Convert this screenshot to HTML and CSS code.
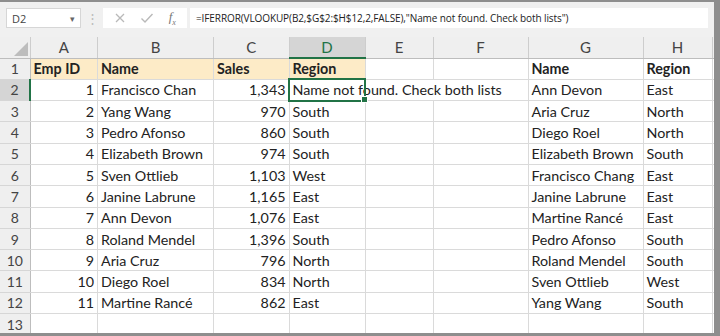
FILE: index.html
```html
<!DOCTYPE html>
<html>
<head>
	<title>Sheet</title>
	<link rel="stylesheet" href="styles.css">
</head>
<body>
	<div class="frame">
		<div class="toolbar">
			<div class="namebox"><span>D2</span><span class="caret">&#9662;</span></div>
			<div class="grip">&#8942;</div>
			<div class="fbtns">
				<svg width="12" height="12" viewBox="0 0 12 12"><path d="M2 2 L10 10 M10 2 L2 10" stroke="#b9b9b9" stroke-width="1.3" fill="none"/></svg>
				<svg width="14" height="12" viewBox="0 0 14 12"><path d="M1.5 6.5 L5 10 L12.5 2" stroke="#b9b9b9" stroke-width="1.4" fill="none"/></svg>
				<span class="fx">f<sub>x</sub></span>
			</div>
			<div class="formula">=IFERROR(VLOOKUP(B2,$G$2:$H$12,2,FALSE),"Name not found. Check both lists")</div>
		</div>
		<table class="sheet">
			<colgroup>
				<col style="width:30px">
				<col style="width:67.5px">
				<col style="width:116px">
				<col style="width:75.5px">
				<col style="width:76px">
				<col style="width:68px">
				<col style="width:95px">
				<col style="width:115px">
				<col style="width:69px">
				<col>
			</colgroup>
			<thead>
				<tr>
					<th class="corner"><span class="tri"></span></th>
					<th>A</th><th>B</th><th>C</th><th class="cur">D</th><th>E</th><th>F</th><th>G</th><th>H</th><th class="rest"></th>
				</tr>
			</thead>
			<tbody>
				<tr><th>1</th><td class="hd">Emp ID</td><td class="hd">Name</td><td class="hd">Sales</td><td class="hd">Region</td><td></td><td></td><td class="b">Name</td><td class="b">Region</td><td class="rest"></td></tr>
				<tr class="active"><th>2</th><td class="n">1</td><td>Francisco Chan</td><td class="n">1,343</td><td class="sel">Name not found. Check both lists</td><td class="spill"></td><td></td><td>Ann Devon</td><td>East</td><td class="rest"></td></tr>
				<tr><th>3</th><td class="n">2</td><td>Yang Wang</td><td class="n">970</td><td>South</td><td></td><td></td><td>Aria Cruz</td><td>North</td><td class="rest"></td></tr>
				<tr><th>4</th><td class="n">3</td><td>Pedro Afonso</td><td class="n">860</td><td>South</td><td></td><td></td><td>Diego Roel</td><td>North</td><td class="rest"></td></tr>
				<tr><th>5</th><td class="n">4</td><td>Elizabeth Brown</td><td class="n">974</td><td>South</td><td></td><td></td><td>Elizabeth Brown</td><td>South</td><td class="rest"></td></tr>
				<tr><th>6</th><td class="n">5</td><td>Sven Ottlieb</td><td class="n">1,103</td><td>West</td><td></td><td></td><td>Francisco Chang</td><td>East</td><td class="rest"></td></tr>
				<tr><th>7</th><td class="n">6</td><td>Janine Labrune</td><td class="n">1,165</td><td>East</td><td></td><td></td><td>Janine Labrune</td><td>East</td><td class="rest"></td></tr>
				<tr><th>8</th><td class="n">7</td><td>Ann Devon</td><td class="n">1,076</td><td>East</td><td></td><td></td><td>Martine Ranc&eacute;</td><td>East</td><td class="rest"></td></tr>
				<tr><th>9</th><td class="n">8</td><td>Roland Mendel</td><td class="n">1,396</td><td>South</td><td></td><td></td><td>Pedro Afonso</td><td>South</td><td class="rest"></td></tr>
				<tr><th>10</th><td class="n">9</td><td>Aria Cruz</td><td class="n">796</td><td>North</td><td></td><td></td><td>Roland Mendel</td><td>South</td><td class="rest"></td></tr>
				<tr><th>11</th><td class="n">10</td><td>Diego Roel</td><td class="n">834</td><td>North</td><td></td><td></td><td>Sven Ottlieb</td><td>West</td><td class="rest"></td></tr>
				<tr><th>12</th><td class="n">11</td><td>Martine Ranc&eacute;</td><td class="n">862</td><td>East</td><td></td><td></td><td>Yang Wang</td><td>South</td><td class="rest"></td></tr>
				<tr><th>13</th><td></td><td></td><td></td><td></td><td></td><td></td><td></td><td></td><td class="rest"></td></tr>
			</tbody>
		</table>
	</div>
</body>
</html>
```

FILE: styles.css
```css
body{
	margin: 0;
	background: #8e8e8e;
}
.frame{
	width: 714px;
	height: 331px;
	margin-top: 2px;
	background: #fff;
	overflow: hidden;
}
.toolbar{
	height: 35px;
	background: #f0f0f0;
	display: flex;
	align-items: flex-start;
	padding: 6px 6px 0 6px;
	box-sizing: border-box;
	font-family: "Open Sans", sans-serif;
}
.namebox{
	width: 75px;
	height: 20px;
	box-sizing: border-box;
	background: #fff;
	border: 1px solid #d6d6d6;
	display: flex;
	justify-content: space-between;
	align-items: center;
	padding: 0 5px;
	font-size: 11px;
	color: #444;
}
.caret{
	font-size: 9px;
	color: #666;
}
.grip{
	width: 22px;
	text-align: center;
	color: #bbb;
	font-size: 13px;
	line-height: 20px;
}
.fbtns{
	width: 84px;
	height: 20px;
	background: #fff;
	display: flex;
	align-items: center;
	justify-content: space-around;
	padding: 0 4px;
	box-sizing: border-box;
}
.fx{
	font-family: "Liberation Serif", serif;
	font-style: italic;
	font-size: 13px;
	color: #777;
}
.fx sub{
	font-size: 8px;
}
.formula{
	flex: 1;
	margin-left: 3px;
	height: 20px;
	background: #fff;
	font-size: 10px;
	letter-spacing: -0.1px;
	line-height: 20px;
	padding-left: 6px;
	color: #222;
	white-space: nowrap;
	overflow: hidden;
}
.sheet{
	border-collapse: collapse;
	table-layout: fixed;
	width: 714px;
	font-family: Lato, sans-serif;
	font-size: 14.3px;
	color: #222;
}
.sheet thead tr{
	height: 21px;
}
.sheet thead th{
	padding: 0;
	background: #efefef;
	border-right: 1px solid #cdcdcd;
	border-bottom: 1px solid #bdbdbd;
	font-weight: normal;
	color: #444;
	font-size: 15px;
	line-height: 17px;
}
.sheet thead th.cur{
	background: #d5d5d5;
	color: #217346;
	border-bottom: 2px solid #217346;
}
.sheet .corner{
	position: relative;
}
.tri{
	position: absolute;
	right: 2px;
	bottom: 2px;
	width: 0;
	height: 0;
	border-left: 14px solid transparent;
	border-bottom: 14px solid #bdbdbd;
}
.sheet tbody tr{
	height: 21.3px;
}
.sheet tbody th{
	padding: 0;
	background: #efefef;
	border-right: 1px solid #bdbdbd;
	border-bottom: 1px solid #d6d6d6;
	font-weight: normal;
	font-size: 14px;
	line-height: 17px;
	color: #444;
}
.sheet tr.active th{
	background: #d5d5d5;
	border-right: 2px solid #217346;
}
.sheet td{
	padding: 0 3px;
	border-right: 1px solid #dadada;
	border-bottom: 1px solid #dadada;
	white-space: nowrap;
	overflow: visible;
	line-height: 17px;
}
.sheet td.n{
	text-align: right;
}
.sheet td.hd{
	background: #fdebc7;
	font-weight: bold;
}
.sheet td.b{
	font-weight: bold;
}
.sheet td.spill{
	border-right-color: transparent;
}
.sheet td.sel{
	position: relative;
	outline: 2px solid #217346;
	outline-offset: -1px;
}
.sheet td.sel::after{
	content: "";
	position: absolute;
	right: -3px;
	bottom: -3px;
	width: 5px;
	height: 5px;
	background: #217346;
	border: 1px solid #fff;
}
.sheet .rest{
	border-right: none;
}
```
